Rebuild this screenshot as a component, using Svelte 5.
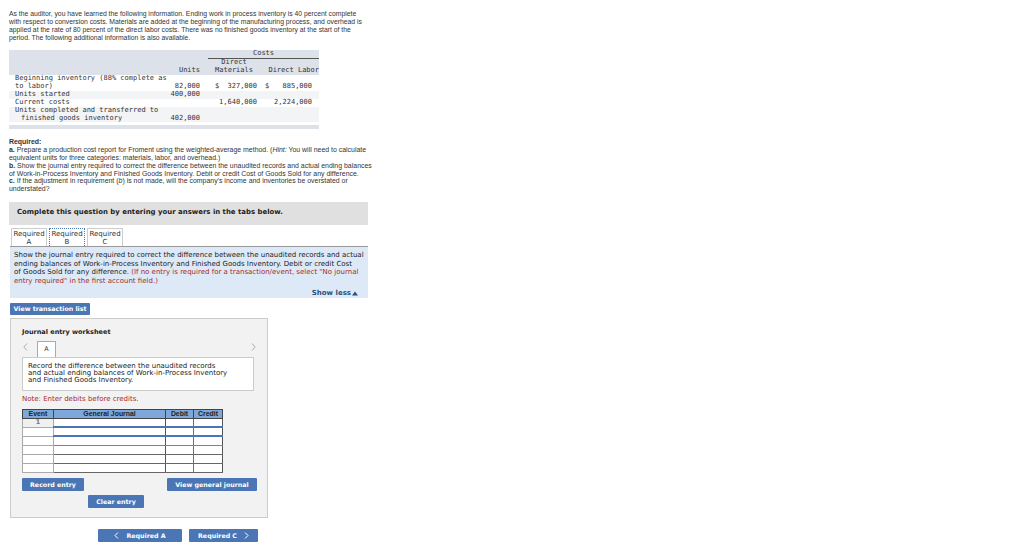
<script>
  const rows = [0, 1, 2, 3, 4, 5];
</script>

<div class="page">
  <p class="intro">As the auditor, you have learned the following information. Ending work in process inventory is 40 percent complete<br>with respect to conversion costs. Materials are added at the beginning of the manufacturing process, and overhead is<br>applied at the rate of 80 percent of the direct labor costs. There was no finished goods inventory at the start of the<br>period. The following additional information is also available.</p>

  <table class="data">
    <colgroup><col class="c1"><col class="c2"><col class="c3"><col class="c4"><col class="c5"></colgroup>
    <thead>
      <tr><th></th><th></th><th></th><th colspan="2" class="costs">Costs</th></tr>
      <tr class="h2"><th></th><th class="u">Units</th><th></th><th class="dm">Direct<br>Materials</th><th class="dl">Direct Labor</th></tr>
    </thead>
    <tbody>
      <tr><td>Beginning inventory (88% complete as<br>to labor)</td><td class="n">82,000</td><td></td><td class="m"><span class="cur">$</span><span class="val">327,000</span></td><td class="m l"><span class="cur">$</span><span class="val">885,000</span></td></tr>
      <tr class="s"><td>Units started</td><td class="n">400,000</td><td></td><td></td><td></td></tr>
      <tr><td>Current costs</td><td></td><td></td><td class="n p3">1,640,000</td><td class="n p7">2,224,000</td></tr>
      <tr class="s"><td>Units completed and transferred to<br><span class="ind">finished goods inventory</span></td><td class="n">402,000</td><td></td><td></td><td></td></tr>
    </tbody>
    <tfoot><tr class="sp"><td colspan="5"></td></tr><tr class="band"><td colspan="5"></td></tr></tfoot>
  </table>

  <div class="req">
    <b>Required:</b><br>
    <b>a.</b> Prepare a production cost report for Froment using the weighted-average method. (<i>Hint:</i> You will need to calculate<br>
    equivalent units for three categories: materials, labor, and overhead.)<br>
    <b>b.</b> Show the journal entry required to correct the difference between the unaudited records and actual ending balances<br>
    of Work-in-Process Inventory and Finished Goods Inventory. Debit or credit Cost of Goods Sold for any difference.<br>
    <b>c.</b> If the adjustment in requirement (<i>b</i>) is not made, will the company's income and inventories be overstated or<br>
    understated?
  </div>

  <div class="complete">Complete this question by entering your answers in the tabs below.</div>

  <div class="tabs">
    <div class="tab">Required<br>A</div>
    <div class="tab on">Required<br>B</div>
    <div class="tab">Required<br>C</div>
  </div>

  <div class="panel">
    <p>Show the journal entry required to correct the difference between the unaudited records and actual<br>ending balances of Work-in-Process Inventory and Finished Goods Inventory. Debit or credit Cost<br>of Goods Sold for any difference. <span class="red">(If no entry is required for a transaction/event, select "No journal<br>entry required" in the first account field.)</span></p>
    <div class="less">Show less<svg width="6" height="5" viewBox="0 0 6 5"><path d="M3 0.5 6 4.5H0z" fill="#2c4f80"/></svg></div>
  </div>

  <button class="btn list">View transaction list</button>

  <section class="sheet">
    <h3>Journal entry worksheet</h3>
    <div class="nav">
      <svg class="chev" width="5" height="8" viewBox="0 0 5 8"><path d="M4 .5.8 4 4 7.5" fill="none" stroke="#999" stroke-width=".8"/></svg>
      <div class="atab">A</div>
      <svg class="chev right" width="5" height="8" viewBox="0 0 5 8"><path d="M1 .5 4.2 4 1 7.5" fill="none" stroke="#999" stroke-width=".8"/></svg>
    </div>
    <div class="record">Record the difference between the unaudited records<br>and actual ending balances of Work-in-Process Inventory<br>and Finished Goods Inventory.</div>
    <div class="note">Note: Enter debits before credits.</div>
    <table class="journal">
      <colgroup><col class="je"><col><col class="jd"><col class="jc"></colgroup>
      <thead><tr><th>Event</th><th>General Journal</th><th>Debit</th><th>Credit</th></tr></thead>
      <tbody>
        {#each rows as r}
          <tr class:thick={r < 2} class:blue={r === 2}><td class="e" class:first={r === 0}>{r === 0 ? '1' : ''}</td><td class="g"></td><td class="d"></td><td class="c"></td></tr>
        {/each}
      </tbody>
    </table>
    <div class="actions">
      <button class="btn rec">Record entry</button>
      <button class="btn view">View general journal</button>
    </div>
    <div class="clear"><button class="btn clr">Clear entry</button></div>
  </section>

  <div class="pager">
    <button class="btn pa"><svg width="5" height="7" viewBox="0 0 5 7"><path d="M4 .5 1 3.5 4 6.5" fill="none" stroke="#fff"/></svg>Required A</button>
    <button class="btn pc">Required C<svg width="5" height="7" viewBox="0 0 5 7"><path d="M1 .5 4 3.5 1 6.5" fill="none" stroke="#fff"/></svg></button>
  </div>
</div>

<style>
  :global(body) { margin: 0; background: #fff; }
  .page { width: 1024px; height: 551px; overflow: hidden; padding: 10px 0 0 9px; box-sizing: border-box; font-family: "Liberation Sans", Arial, sans-serif; color: #333; }
  .intro { margin: 0; font-size: 6.82px; line-height: 7.9px; white-space: nowrap; }

  .data { border-collapse: collapse; width: 310px; margin-top: 8.4px; font-family: "DejaVu Sans Mono", monospace; font-size: 7px; line-height: 7.9px; table-layout: fixed; color: #333; }
  .c1 { width: 157px; }
  .c2 { width: 34px; }
  .c3 { width: 8px; }
  .c4 { width: 52px; }
  .data th { background: #dde1ea; font-weight: normal; padding: 0; }
  .data td { padding: 0; vertical-align: bottom; }
  .data td:first-child { padding-left: 6px; white-space: nowrap; }
  .costs { text-align: center; height: 8px; border-bottom: 1px solid #555; }
  .h2 th { vertical-align: bottom; height: 16px; }
  .u { text-align: right; }
  .dm { text-align: center; }
  .dl { text-align: right; }
  .n { text-align: right; }
  .p3 { padding-right: 3px !important; }
  .p7 { padding-right: 7px !important; }
  .cur { padding-left: 7px; }
  .val { float: right; padding-right: 3px; }
  .l .cur { padding-left: 5px; }
  .l .val { padding-right: 7px; }
  .s td { background: #f3f4f6; }
  .ind { padding-left: 6px; }
  .sp td { height: 3px; }
  .band td { background: #dde1ea; height: 4px; }

  .req { margin-top: 9px; font-size: 6.95px; line-height: 7.8px; white-space: nowrap; }
  .complete { width: 359px; height: 23px; box-sizing: border-box; margin-top: 9px; background: #e0e0e0; padding: 6px 8px 0; font: bold 6.95px/9px "DejaVu Sans", sans-serif; color: #222; }

  .tabs { display: flex; gap: 2px; margin: 3px 0 0 2px; height: 18px; }
  .tab { width: 36px; box-sizing: border-box; border: 1px solid #ccc; border-bottom: 0; text-align: center; font: 7px/8px "DejaVu Sans", sans-serif; padding-top: 1px; color: #333; white-space: nowrap; }
  .tab.on { border: 1px dotted #4a76b5; border-bottom: 0; }

  .panel { margin-left: 1px; width: 358px; height: 52px; box-sizing: border-box; background: #dde9f6; border-top: 1px solid #999; padding: 4px 4px 0 4px; }
  .panel p { margin: 0; font: 7px/8.6px "DejaVu Sans", sans-serif; white-space: nowrap; color: #222; }
  .red { color: #a52a2a; }
  .less { display: flex; justify-content: flex-end; align-items: center; gap: 1px; margin: 4px 6px 0 0; font: bold 7px/8px "DejaVu Sans", sans-serif; color: #2c4f80; }

  .btn { display: block; border: 0; border-radius: 1px; background: #4a76b5; color: #fff; font: bold 6.3px/8px "DejaVu Sans", sans-serif; padding: 0; height: 12px; text-align: center; }
  .list { width: 80px; margin: 5px 0 0 1px; }

  .sheet { width: 258px; height: 200px; box-sizing: border-box; margin: 3px 0 0 1px; background: #f2f2f2; border: 1px solid #ccc; padding: 9px 11px 0; }
  h3 { margin: 0; font: bold 6.5px/9px "DejaVu Sans", sans-serif; color: #222; }
  .nav { display: flex; align-items: center; margin-top: 4px; height: 16px; }
  .chev { margin-right: 9px; margin-left: 1px; margin-top: -4px; }
  .chev.right { margin-left: auto; margin-right: 0; }
  .atab { width: 19px; height: 16px; box-sizing: border-box; background: #fff; border: 1px solid #aaa; border-bottom: 0; text-align: center; font: 6.4px/14px "DejaVu Sans", sans-serif; color: #333; }
  .record { width: 232px; height: 34px; box-sizing: border-box; background: #fff; border: 1px solid #ccc; padding: 5px 5px 0 5px; font: 7px/7.2px "DejaVu Sans", sans-serif; color: #222; white-space: nowrap; }
  .note { margin-top: 4px; font: 7px/9px "DejaVu Sans", sans-serif; color: #a52a2a; }

  .journal { border-collapse: collapse; margin-top: 5px; width: 201px; table-layout: fixed; }
  .je { width: 31px; }
  .jd { width: 28px; }
  .jc { width: 29px; }
  .journal th { background: #7fa8da; font: bold 6.9px/8px "Liberation Sans", sans-serif; height: 8px; padding: 0; border: 1px solid #444; color: #222; }
  .journal td { height: 8px; padding: 0; background: #fff; border-top: 1px solid #666; border-bottom: 1px solid #666; text-align: center; color: #777; font: bold 6.4px/7px "DejaVu Sans", sans-serif; }
  .journal td.e { border: 1px solid #aaa; }
  .journal td.first { background: #f0f0f0; }
  .journal td.g { border-left: 1px solid #4a76b5; }
  .journal td.d { border-left: 1px solid #555; border-right: 1px solid #4a76b5; }
  .journal td.c { border-right: 1px solid #555; }
  .journal tr.thick td { height: 7px; }
  .journal tr.thick td:not(.e) { border-bottom: 2px solid #4a76b5; }
  .journal tr.blue td:not(.e) { border-bottom-color: #5f86bd; }

  .actions { display: flex; justify-content: space-between; margin-top: 5px; width: 235px; }
  .rec { width: 62px; height: 13px; }
  .view { width: 90px; height: 13px; }
  .clear { margin-top: 4px; padding-left: 66px; }
  .clr { width: 56px; height: 13px; }

  .pager { display: flex; gap: 7px; margin: 11px 0 0 89px; }
  .pa { width: 84px; height: 13px; display: flex; align-items: center; justify-content: center; gap: 7px; }
  .pc { width: 69px; height: 13px; display: flex; align-items: center; justify-content: center; gap: 7px; }
</style>
